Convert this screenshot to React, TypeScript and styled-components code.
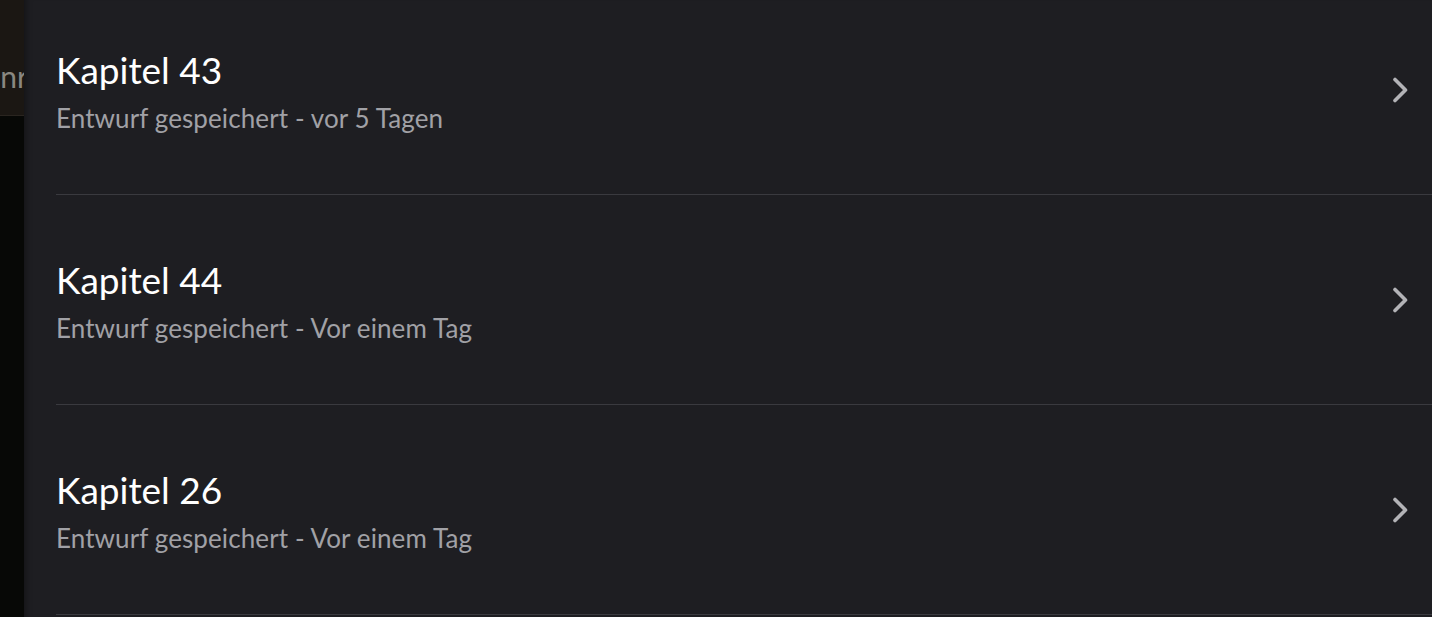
import React from 'react';
import styled, { createGlobalStyle } from 'styled-components';

interface Draft {
  id: number;
  title: string;
  status: string;
}

const drafts: Draft[] = [
  { id: 43, title: 'Kapitel 43', status: 'Entwurf gespeichert - vor 5 Tagen' },
  { id: 44, title: 'Kapitel 44', status: 'Entwurf gespeichert - Vor einem Tag' },
  { id: 26, title: 'Kapitel 26', status: 'Entwurf gespeichert - Vor einem Tag' },
];

const Chevron = () => (
  <svg width="18" height="26" viewBox="0 0 18 26" fill="none">
    <path
      d="M3 2.5 L13.5 13 L3 23.5"
      stroke="#b3b3b7"
      strokeWidth="3.6"
      strokeLinecap="round"
      strokeLinejoin="round"
    />
  </svg>
);

const App = () => {
  return (
    <>
      <GlobalStyle />
      <Screen>
        <Backdrop>
          <BackdropHeader>
            <BackdropLabel>Kapitel nr</BackdropLabel>
          </BackdropHeader>
        </Backdrop>
        <Panel>
          <List>
            {drafts.map((draft) => (
              <Row key={draft.id}>
                <Texts>
                  <Title>{draft.title}</Title>
                  <Status>{draft.status}</Status>
                </Texts>
                <Chevron />
              </Row>
            ))}
          </List>
        </Panel>
      </Screen>
    </>
  );
};

const GlobalStyle = createGlobalStyle`
  html, body {
    margin: 0;
    padding: 0;
    background: #1e1e22;
  }
`;

const Screen = styled.div`
  display: flex;
  width: 1432px;
  height: 617px;
  overflow: hidden;
  font-family: Lato, 'Noto Sans', sans-serif;
`;

const Backdrop = styled.div`
  width: 24px;
  flex-shrink: 0;
  background: #070806;
  overflow: hidden;
`;

const BackdropHeader = styled.div`
  height: 116px;
  background: #1b1713;
  border-bottom: 1px solid #2a2520;
  display: flex;
  align-items: center;
  justify-content: flex-end;
  padding-top: 36px;
  box-sizing: border-box;
`;

const BackdropLabel = styled.span`
  color: #8a8780;
  font-size: 30px;
  white-space: nowrap;
  margin-right: -4px;
`;

const Panel = styled.main`
  flex: 1;
  background: #1e1e22;
  box-shadow: inset 8px 0 6px -6px rgba(0, 0, 0, 0.35);
`;

const List = styled.ul`
  list-style: none;
  margin: -15px 0 0;
  padding: 0;
`;

const Row = styled.li`
  height: 209px;
  margin-left: 32px;
  padding: 0 22px 0 0;
  display: flex;
  align-items: center;
  justify-content: space-between;
  border-bottom: 1px solid #3a3a3f;
`;

const Texts = styled.div`
  display: flex;
  flex-direction: column;
  padding-top: 4px;
`;

const Title = styled.div`
  color: #ffffff;
  font-size: 37px;
  line-height: 44px;
`;

const Status = styled.div`
  color: #a1a1a6;
  font-size: 26px;
  line-height: 34px;
  letter-spacing: 0.1px;
  margin-top: 9px;
`;

export default App;
